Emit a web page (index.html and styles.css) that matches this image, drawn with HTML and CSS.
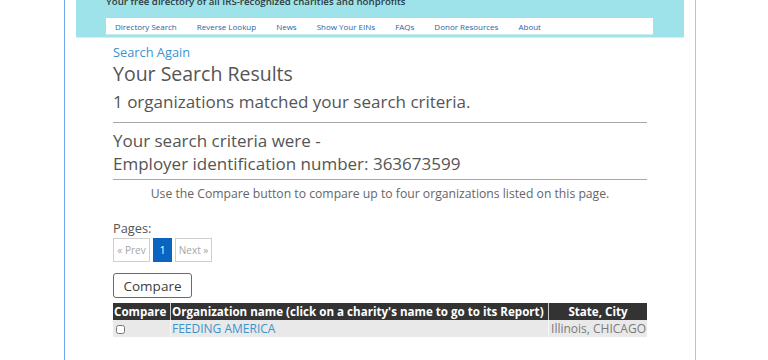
FILE: index.html
```html
<!DOCTYPE html>
<html>
<head>
<meta charset="utf-8">
<link rel="stylesheet" href="styles.css">
</head>
<body>
<div class="frame">
  <div class="header">
    <div class="tagline">Your free directory of all IRS-recognized charities and nonprofits</div>
    <nav class="nav">
      <a href="#">Directory Search</a>
      <a href="#">Reverse Lookup</a>
      <a href="#">News</a>
      <a href="#">Show Your EINs</a>
      <a href="#">FAQs</a>
      <a href="#">Donor Resources</a>
      <a href="#">About</a>
    </nav>
  </div>
  <main class="content">
    <a class="again" href="#">Search Again</a>
    <h1 class="title">Your Search Results</h1>
    <p class="matched">1 organizations matched your search criteria.</p>
    <hr class="rule">
    <p class="criteria">Your search criteria were -<br>Employer identification number: 363673599</p>
    <hr class="rule rule2">
    <p class="hint">Use the Compare button to compare up to four organizations listed on this page.</p>
    <p class="pages">Pages:</p>
    <div class="pager">
      <span class="pg disabled">« Prev</span>
      <span class="pg active">1</span>
      <span class="pg disabled">Next »</span>
    </div>
    <button class="compare" type="button">Compare</button>
    <table class="results">
      <thead>
        <tr><th class="c1">Compare</th><th class="c2">Organization name (click on a charity's name to go to its Report)</th><th class="c3">State, City</th></tr>
      </thead>
      <tbody>
        <tr><td class="c1"><input type="checkbox" class="chk"></td><td class="c2"><a href="#">FEEDING AMERICA</a></td><td class="c3">Illinois, CHICAGO</td></tr>
      </tbody>
    </table>
  </main>
</div>
</body>
</html>
```

FILE: styles.css
```css
html, body {
  margin: 0;
  padding: 0;
  background: #ffffff;
}
body {
  font-family: "Open Sans", "DejaVu Sans", sans-serif;
  color: #585858;
  height: 360px;
  overflow: hidden;
}
.frame {
  margin-left: 64px;
  width: 608px;
  height: 360px;
  border-left: 1px solid #6fa6ee;
  border-right: 1px solid #a9c7ee;
  padding: 0 11px;
}
.header {
  background: #9fe3ea;
  height: 37px;
  border-bottom: 1px solid #d3f1f4;
  padding: 0 31px 0 30px;
  overflow: hidden;
}
.tagline {
  font-size: 9.7px;
  line-height: 14px;
  margin-top: -5px;
  height: 14px;
  color: #2f3a3f;
  font-weight: 600;
  white-space: nowrap;
}
.nav {
  margin-top: 9px;
  height: 16px;
  background: #ffffff;
  display: flex;
  align-items: center;
  gap: 20px;
  padding-left: 9px;
  border-bottom: 1px solid #c9eef2;
}
.nav a {
  font-size: 8px;
  font-weight: 500;
  color: #2a63a6;
  text-decoration: none;
  white-space: nowrap;
}
.content {
  margin: 0 37px;
  display: flex;
  flex-direction: column;
  align-items: flex-start;
}
.again {
  margin-top: 5px;
  font-size: 12.8px;
  line-height: 18px;
  color: #3a93cd;
  text-decoration: none;
}
.title {
  margin: 0;
  font-size: 19.5px;
  line-height: 26px;
  font-weight: 500;
  color: #555555;
}
.matched {
  margin: 3px 0 0;
  font-size: 17px;
  line-height: 23px;
  font-weight: 500;
  color: #555555;
}
.rule {
  align-self: stretch;
  margin: 9px 0 0;
  border: 0;
  border-top: 1px solid #a8a8a8;
  height: 0;
}
.criteria {
  margin: 6px 0 0;
  font-size: 17px;
  line-height: 23px;
  font-weight: 500;
  color: #555555;
}
.rule2 {
  margin-top: 4px;
}
.hint {
  align-self: stretch;
  text-align: center;
  margin: 5px 0 0;
  font-size: 12.2px;
  line-height: 17px;
  color: #666666;
}
.pages {
  margin: 18px 0 0;
  font-size: 12.8px;
  line-height: 17px;
  color: #555555;
}
.pager {
  margin-top: 1px;
  display: flex;
  gap: 3px;
  height: 24px;
}
.pg {
  display: flex;
  align-items: center;
  justify-content: center;
  box-sizing: border-box;
  height: 24px;
  font-size: 10px;
  border: 1px solid #cfcfcf;
  color: #a6a6a6;
  width: 37px;
}
.pg.active {
  background: #0b64c0;
  border-color: #0b64c0;
  color: #ffffff;
  width: 19px;
}
.compare {
  margin-top: 11px;
  height: 25px;
  width: 79px;
  box-sizing: border-box;
  background: #ffffff;
  border: 1px solid #6a6a6a;
  border-radius: 3px;
  font-family: "Open Sans", "DejaVu Sans", sans-serif;
  font-size: 13.5px;
  color: #3c3c3c;
  padding: 0;
}
.results {
  margin-top: 5px;
  align-self: stretch;
  border-collapse: collapse;
  font-size: 12px;
}
.results th {
  background: #333333;
  color: #ffffff;
  font-weight: 700;
  font-size: 11.6px;
  height: 17px;
  line-height: 17px;
  padding: 0 1px;
  white-space: nowrap;
  border-left: 1px solid #cccccc;
}
.results th:first-child {
  border-left: 0;
}
.results td {
  background: #e9e9e9;
  height: 17px;
  line-height: 17px;
  padding: 0 1px;
  border-left: 1px solid #f6f6f6;
  white-space: nowrap;
}
.results td:first-child {
  border-left: 0;
}
.results .c1 {
  width: 55px;
  text-align: left;
}
.results .c2 {
  text-align: left;
}
.results .c3 {
  width: 96px;
  text-align: center;
}
.results td.c3 {
  text-align: right;
  color: #7a7a7a;
}
.results td a {
  color: #3a93cd;
  text-decoration: none;
}
.chk {
  margin: 0 0 0 2px;
  width: 9px;
  height: 9px;
  vertical-align: middle;
}
```
